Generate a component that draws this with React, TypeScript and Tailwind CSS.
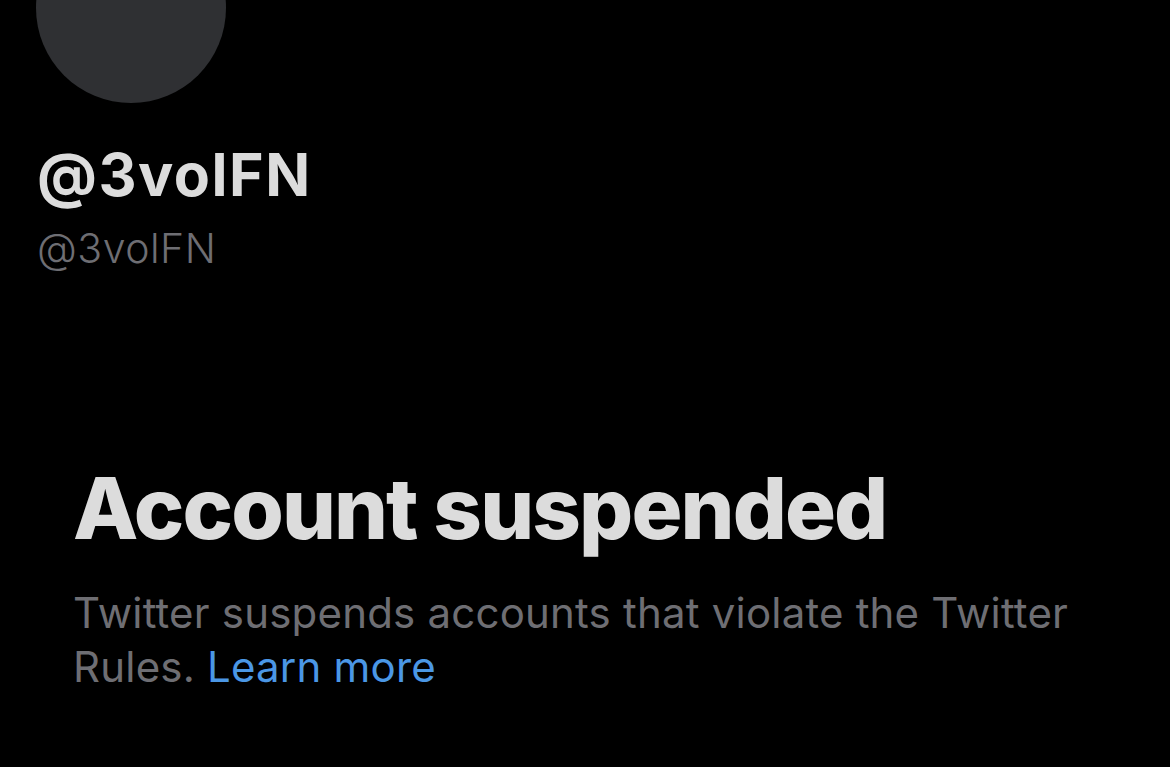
export default function App() {
  return (
    <main
      className="relative h-[767px] w-[1170px] overflow-hidden bg-black"
      style={{ fontFamily: "Inter, 'Noto Sans', sans-serif" }}
    >
      {/* avatar, cut off by the top edge */}
      <div className="absolute left-[36px] top-[-87px] h-[190px] w-[190px] rounded-full bg-[#2f3033]" />

      <section className="px-[37px] pt-[140px]">
        <h1 className="text-[59px] font-bold leading-[70px] tracking-[1.5px] text-[#dcdcdc]">
          @3volFN
        </h1>
        <p className="mt-[13px] text-[41px] font-light leading-[50px] tracking-[0.5px] text-[#6e6e73]">
          @3volFN
        </p>
      </section>

      <section className="px-[73px] pt-[186px]">
        <h2 className="text-[85px] font-extrabold leading-[100px] tracking-[-1.9px] text-[#dcdcdc]">
          Account suspended
        </h2>
        <p className="mt-[27px] text-[42px] leading-[54px] tracking-[0.2px] text-[#6e6e73]">
          Twitter suspends accounts that violate the Twitter Rules.{" "}
          <span className="text-[#4b97e5]">Learn more</span>
        </p>
      </section>
    </main>
  );
}
